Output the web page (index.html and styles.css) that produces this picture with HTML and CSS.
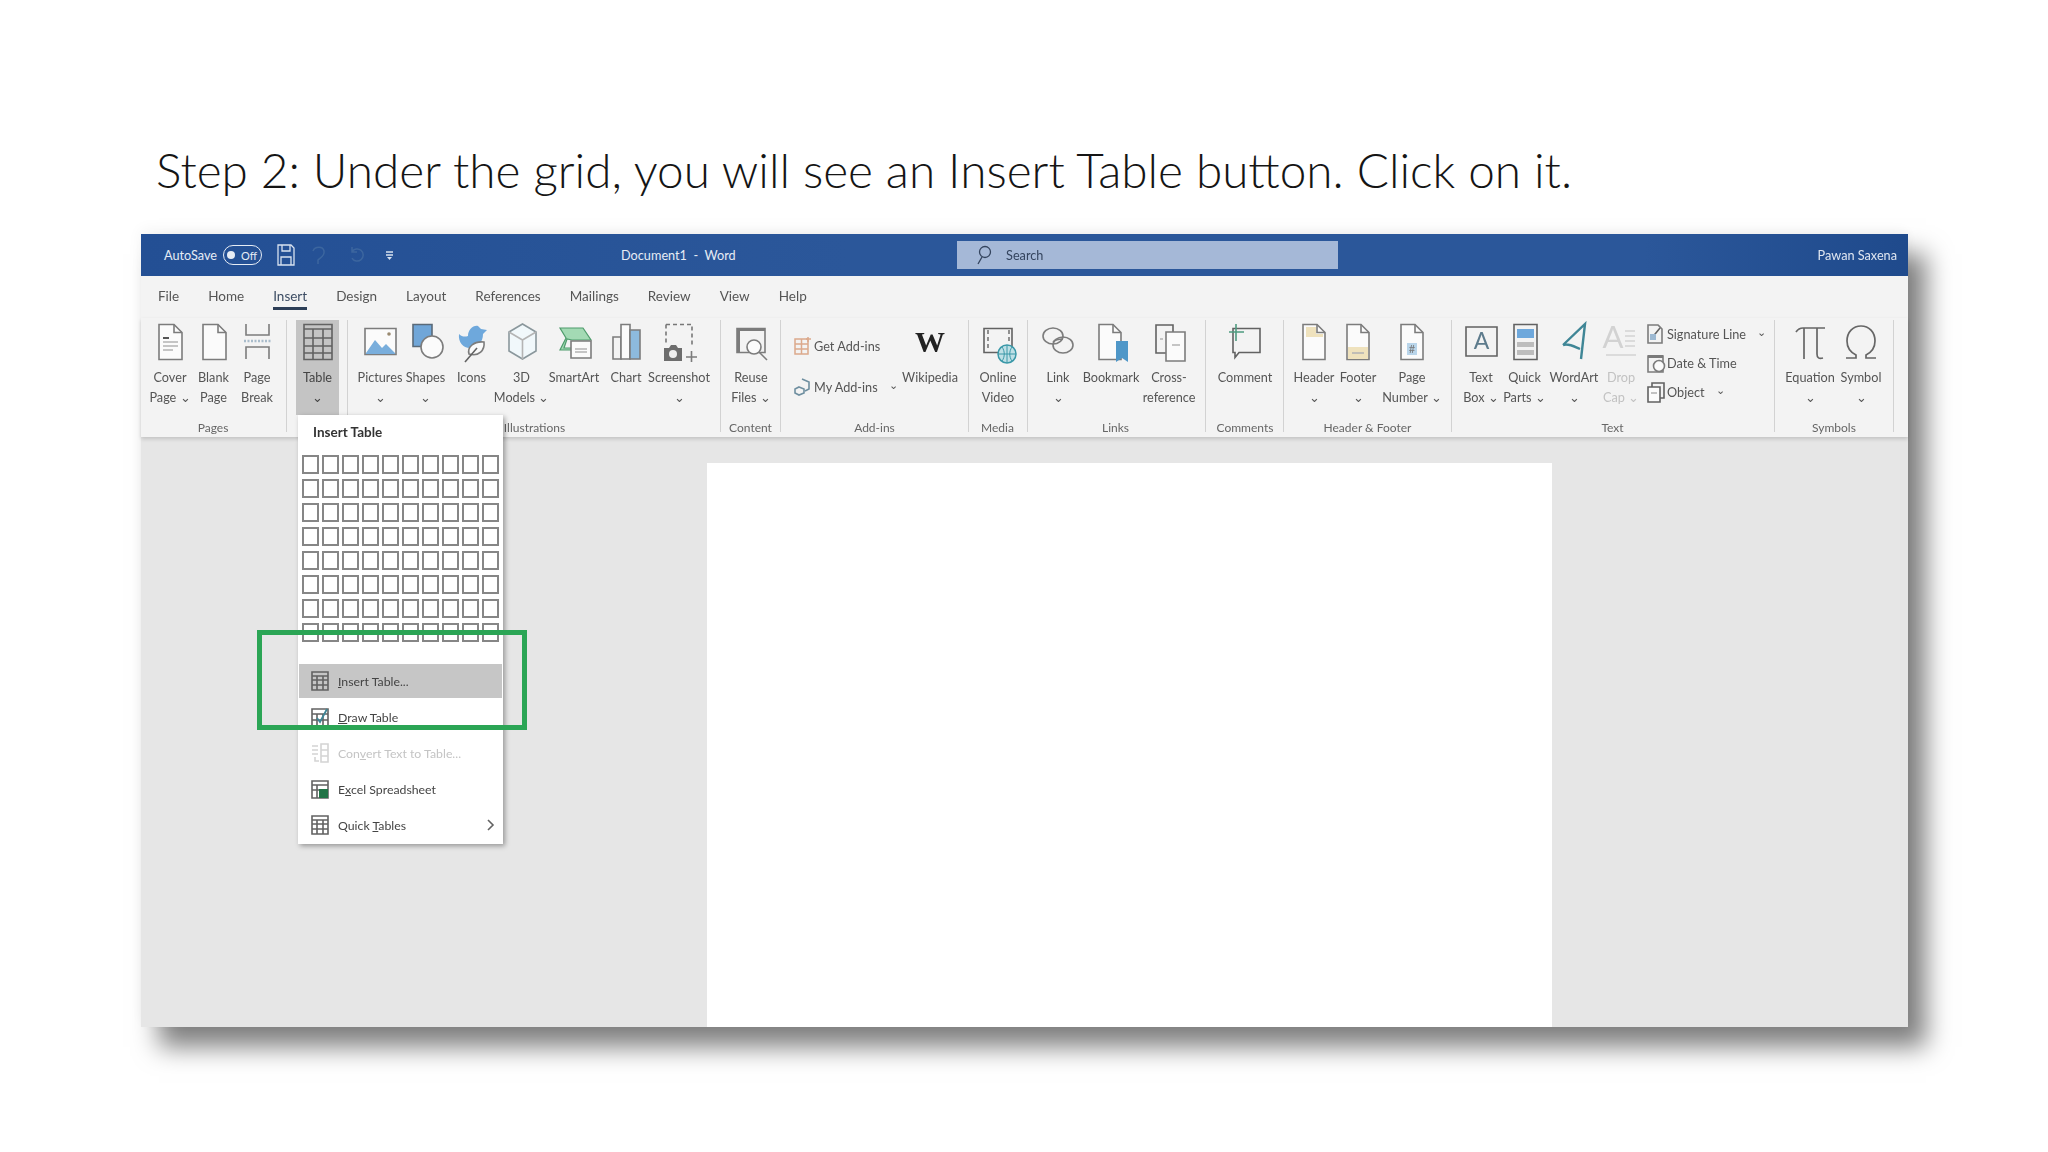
FILE: index.html
```html
<!DOCTYPE html>
<html lang="en">
<head>
<meta charset="UTF-8">
<meta name="viewport" content="width=device-width, initial-scale=1.0">
<title>Step 2</title>
<link rel="stylesheet" href="styles.css">
</head>
<body>
<div class="slide">
    <h1 class="step-title">Step 2: Under the grid, you will see an Insert Table button. Click on it.</h1>
    <div class="window">
        <!-- title bar -->
        <div class="titlebar">
            <span class="autosave">AutoSave</span>
            <span class="toggle"><i class="toggle-dot"></i>Off</span>
            <svg class="tb-icon" width="18" height="22" viewBox="0 0 18 22"><path class="tb-line" d="M1 1h13l3 3v17H1zM5 1v6h8V1M4 21v-8h10v8"/></svg>
            <svg class="tb-icon undo" width="18" height="22" viewBox="0 0 18 22"><path class="tb-dim" d="M4 7c2-5 10-5 11 0s-4 7-6 9v4"/></svg>
            <svg class="tb-icon redo" width="18" height="22" viewBox="0 0 18 22"><path class="tb-dim" d="M4 14a6 6 0 1 0 0-6M4 3v5h5"/></svg>
            <svg class="tb-icon more" width="10" height="12" viewBox="0 0 10 12"><path class="tb-line" d="M1 3h7M1 6h7"/><path d="M2 8h5l-2.500 3z" fill="#d8e2f0"/></svg>
            <span class="doc-name">Document1&nbsp; - &nbsp;Word</span>
            <div class="search">
                <svg width="18" height="20" viewBox="0 0 18 20"><circle class="search-ico" cx="10" cy="7" r="5.500"/><path class="search-ico" d="M7 12l-4 7"/></svg>
                <span>Search</span>
            </div>
            <span class="user">Pawan Saxena</span>
        </div>

        <!-- tabs -->
        <div class="tabs">
            <span class="tab">File</span>
            <span class="tab">Home</span>
            <span class="tab active">Insert</span>
            <span class="tab">Design</span>
            <span class="tab">Layout</span>
            <span class="tab">References</span>
            <span class="tab">Mailings</span>
            <span class="tab">Review</span>
            <span class="tab">View</span>
            <span class="tab">Help</span>
        </div>

        <!-- ribbon -->
        <div class="ribbon">
            <section class="group g-pages">
                <div class="items">
                    <div class="item w44">
                        <svg class="ico" viewBox="0 0 40 44"><path class="ln paper" d="M9 3.500h15l8 8v27H9z"/><path class="ln" d="M24 3.500v8h8"/><path class="dark" d="M13 17h6"/><path class="ln soft" d="M13 21h15M13 25h15M13 29h10"/></svg>
                        <span>Cover</span><span>Page ⌄</span>
                    </div>
                    <div class="item w43">
                        <svg class="ico" viewBox="0 0 40 44"><path class="ln paper" d="M9 3.500h15l8 8v27H9z"/><path class="ln" d="M24 3.500v8h8"/></svg>
                        <span>Blank</span><span>Page</span>
                    </div>
                    <div class="item w44">
                        <svg class="ico" viewBox="0 0 40 44"><path class="ln" d="M9 3v11h23V3M9 38V26h23v12"/><path class="dots" d="M7 20h27"/></svg>
                        <span>Page</span><span>Break</span>
                    </div>
                </div>
                <div class="group-name">Pages</div>
            </section>

            <section class="group g-table">
                <div class="items">
                    <div class="item w43 pressed">
                        <svg class="ico" viewBox="0 0 40 44"><path class="ln strong" d="M6 3.500h28v35H6zM6 8h28M6 17h28M6 25h28M6 32h28M15 8v30M25 8v30"/></svg>
                        <span>Table</span><span>⌄</span>
                    </div>
                </div>
                <div class="group-name"></div>
            </section>

            <section class="group g-illus">
                <div class="items">
                    <div class="item w46">
                        <svg class="ico" viewBox="0 0 40 44"><path class="ln paper" d="M5 7.500h31v26H5z"/><path d="M6 32l9-13 7 8 4-4 9 9v1H6z" fill="#79aedc"/><circle cx="29" cy="13" r="1.800" fill="#9a8a70"/></svg>
                        <span>Pictures</span><span>⌄</span>
                    </div>
                    <div class="item w45">
                        <svg class="ico" viewBox="0 0 40 44"><path class="ln blue" d="M7 3.500h19v22H7z"/><circle class="ln paper" cx="26" cy="26" r="11"/></svg>
                        <span>Shapes</span><span>⌄</span>
                    </div>
                    <div class="item w47">
                        <svg class="ico" viewBox="0 0 40 44"><path d="M7 13c3 3 6 3 9 2 0-6 5-11 10-10l3 3 6 1-4 4c0 8-5 14-13 14-7 0-12-6-11-14z" fill="#6ea8dc"/><path class="ln paper" d="M17 33c-2-7 5-13 15-12 1 8-5 15-15 12z"/><path class="ln strong" d="M13 41l12-14"/></svg>
                        <span>Icons</span>
                    </div>
                    <div class="item w53">
                        <svg class="ico" viewBox="0 0 40 44"><path class="ln cube" d="M20.500 3L34 11v19l-13.500 8L7 30V11z"/><path class="ln soft" d="M7 11l13.500 8L34 11M20.500 19v19"/></svg>
                        <span>3D</span><span>Models ⌄</span>
                    </div>
                    <div class="item w52">
                        <svg class="ico" viewBox="0 0 40 44"><path class="green-shape" d="M6 7h23l8 12H18l-5-1 -3 9h9v2H6l6-12z"/><path class="ln paper" d="M17 20h20v17H17z"/><path class="ln soft" d="M21 28h12M21 31h12"/></svg>
                        <span>SmartArt</span>
                    </div>
                    <div class="item w52">
                        <svg class="ico" viewBox="0 0 40 44"><path class="ln" fill="#ccc" d="M7 16h8v22H7z"/><path class="ln paper" d="M15 3.500h9V38h-9z"/><path class="ln blue-soft" d="M24 9h10v29H24z"/></svg>
                        <span>Chart</span>
                    </div>
                    <div class="item w54">
                        <svg class="ico" viewBox="0 0 40 44"><path class="dash" d="M7 3.500h26V26M7 3.500V22"/><path d="M5 27h5l2-3h5l2 3h4v13H5z" fill="#6d6d6d"/><circle cx="14" cy="33" r="4" fill="#eee"/><path class="ln" d="M27 36h11M32.500 30v11"/></svg>
                        <span>Screenshot</span><span>⌄</span>
                    </div>
                </div>
                <div class="group-name">Illustrations</div>
            </section>

            <section class="group g-content">
                <div class="items">
                    <div class="item w44">
                        <svg class="ico" viewBox="0 0 40 44"><path class="ln" d="M6 7.500h28v24H6z"/><path d="M6 7h28v3H6zM6 10h3v21H6z" fill="#7b7b7b"/><circle class="ln paper" cx="23" cy="26" r="7"/><path class="ln" d="M28 31l8 8"/></svg>
                        <span>Reuse</span><span>Files ⌄</span>
                    </div>
                </div>
                <div class="group-name">Content</div>
            </section>

            <section class="group g-addins">
                <div class="items">
                    <div class="stack addin-stack">
                        <div class="stack-row">
                            <svg width="20" height="20" viewBox="0 0 20 20"><path class="orange" d="M2 3h13v15H2zM2 8h13M2 13h13M8.500 3v15"/><path class="orange" d="M15 1v5M13 3h5"/></svg>
                            <span>Get Add-ins</span>
                        </div>
                        <div class="stack-row">
                            <svg width="20" height="20" viewBox="0 0 20 20"><path class="ln hex" d="M9 2l7 3v7l-4 2"/><path class="ln hex" d="M6 10l5 2v4l-5 2-4-2v-4z"/></svg>
                            <span>My Add-ins</span><span class="arrow">⌄</span>
                        </div>
                    </div>
                    <div class="item w60">
                        <div class="wiki-w">W</div>
                        <span>Wikipedia</span>
                    </div>
                </div>
                <div class="group-name">Add-ins</div>
            </section>

            <section class="group g-media">
                <div class="items">
                    <div class="item w44">
                        <svg class="ico" viewBox="0 0 40 44"><path class="ln strong" d="M6 7.500h28v24H6z"/><path class="dash" d="M10 9v21M31 9v12"/><circle cx="29" cy="33" r="9" fill="#bfe0e6" stroke="#3a98a8" stroke-width="1.500"/><path d="M20 33h18M29 24v18M24 26c3 4 3 10 0 14M34 26c-3 4-3 10 0 14" fill="none" stroke="#3a98a8"/></svg>
                        <span>Online</span><span>Video</span>
                    </div>
                </div>
                <div class="group-name">Media</div>
            </section>

            <section class="group g-links">
                <div class="items">
                    <div class="item w48">
                        <svg class="ico" viewBox="0 0 40 44"><ellipse class="ln" cx="15" cy="15" rx="10" ry="8"/><ellipse class="ln" cx="25" cy="24" rx="10" ry="8"/><path class="ln" d="M15 21c3-3 7-3 10-3"/></svg>
                        <span>Link</span><span>⌄</span>
                    </div>
                    <div class="item w58">
                        <svg class="ico" viewBox="0 0 40 44"><path class="ln paper" d="M8 3.500h14l8 8v27H8z"/><path class="ln" d="M22 3.500v8h8"/><path d="M25 20h12v21l-6-4-6 4z" fill="#4f97c8"/></svg>
                        <span>Bookmark</span>
                    </div>
                    <div class="item w58">
                        <svg class="ico" viewBox="0 0 40 44"><path class="ln strong" d="M7 4h17v28H7z"/><path class="ln paper" d="M17 11h19v29H17z"/><path class="ln soft" d="M23 24h8M11 18h3"/></svg>
                        <span>Cross-</span><span>reference</span>
                    </div>
                </div>
                <div class="group-name">Links</div>
            </section>

            <section class="group g-comments">
                <div class="items">
                    <div class="item w60">
                        <svg class="ico" viewBox="0 0 40 44"><path class="ln strong" d="M8 7.500h27v24H14l-4 5v-5H8z"/><path class="plus" d="M11 3v17M4 11h15"/></svg>
                        <span>Comment</span>
                    </div>
                </div>
                <div class="group-name">Comments</div>
            </section>

            <section class="group g-header">
                <div class="items">
                    <div class="item w44">
                        <svg class="ico" viewBox="0 0 40 44"><path class="ln paper" d="M9 3.500h14l8 8v27H9z"/><path d="M12 6h10v7h7v3H12z" fill="#efe2bd"/><path class="ln" d="M23 3.500v8h8"/></svg>
                        <span>Header</span><span>⌄</span>
                    </div>
                    <div class="item w44">
                        <svg class="ico" viewBox="0 0 40 44"><path class="ln paper" d="M9 3.500h14l8 8v27H9z"/><path d="M10 26h20v12H10z" fill="#efe2bd"/><path class="ln" d="M23 3.500v8h8"/><path class="ln soft" d="M14 32h12"/></svg>
                        <span>Footer</span><span>⌄</span>
                    </div>
                    <div class="item w64">
                        <svg class="ico" viewBox="0 0 40 44"><path class="ln paper" d="M9 3.500h14l8 8v27H9z"/><path class="ln" d="M23 3.500v8h8"/><path d="M15 22h10v12H15z" fill="#b9d5ea"/><text class="doc-hash" x="20" y="32">#</text></svg>
                        <span>Page</span><span>Number ⌄</span>
                    </div>
                </div>
                <div class="group-name">Header &amp; Footer</div>
            </section>

            <section class="group g-text">
                <div class="items">
                    <div class="item w44">
                        <svg class="ico" viewBox="0 0 40 44"><path class="ln strong" d="M5 6h31v29H5z"/><text class="box-a" x="20.500" y="28">A</text></svg>
                        <span>Text</span><span>Box ⌄</span>
                    </div>
                    <div class="item w43">
                        <svg class="ico" viewBox="0 0 40 44"><path class="ln strong" d="M9 3.500h23v35H9z"/><path d="M12 8h17v9H12z" fill="#6ea8dc"/><path d="M12 21h17v5H12zM12 29h17v5H12z" fill="#bdbdbd"/></svg>
                        <span>Quick</span><span>Parts ⌄</span>
                    </div>
                    <div class="item w56">
                        <svg class="ico" viewBox="0 0 40 44"><path class="wordart" d="M9 24L31 3l-4 35M9 24c6-2 12 2 17 4"/></svg>
                        <span>WordArt</span><span>⌄</span>
                    </div>
                    <div class="item w38 off">
                        <svg class="ico" viewBox="0 0 40 44"><text class="cap-a" x="12" y="27">A</text><path class="ln faint" d="M24 10h10M24 15h10M24 20h10M24 25h10M5 34h30"/></svg>
                        <span>Drop</span><span>Cap ⌄</span>
                    </div>
                    <div class="stack text-stack">
                        <div class="stack-row">
                            <svg width="20" height="22" viewBox="0 0 20 22"><path class="ln" d="M2 2h10l4 4v14H2z"/><path class="ln strong" d="M5 16l9-11"/><path d="M4 11h6v6H4z" fill="#9db9d2"/></svg>
                            <span>Signature Line</span><span class="arrow">⌄</span>
                        </div>
                        <div class="stack-row">
                            <svg width="20" height="22" viewBox="0 0 20 22"><path class="ln" d="M2 4h15v16H2z"/><path d="M2 3h15v3H2z" fill="#7a7a7a"/><circle class="ln paper" cx="13" cy="14" r="5.500"/></svg>
                            <span>Date &amp; Time</span>
                        </div>
                        <div class="stack-row">
                            <svg width="20" height="22" viewBox="0 0 20 22"><path class="ln strong" d="M6 2h12v15H6z"/><path class="ln strong paper" d="M2 6h12v15H2z"/><path class="ln soft" d="M5 12h6"/></svg>
                            <span>Object</span><span class="arrow">⌄</span>
                        </div>
                    </div>
                </div>
                <div class="group-name">Text</div>
            </section>

            <section class="group g-symbols">
                <div class="items">
                    <div class="item w54">
                        <svg class="ico" viewBox="0 0 40 44"><path class="thin" d="M6 11c2-3 4-4 7-4h22M14 7v31M27 7v26c0 4 2 5 6 4"/></svg>
                        <span>Equation</span><span>⌄</span>
                    </div>
                    <div class="item w48">
                        <svg class="ico" viewBox="0 0 40 44"><path class="thin" d="M5 37h10v-3c-6-3-9-8-9-14 0-9 6-15 14-15s14 6 14 15c0 6-3 11-9 14v3h10"/></svg>
                        <span>Symbol</span><span>⌄</span>
                    </div>
                </div>
                <div class="group-name">Symbols</div>
            </section>
        </div>

        <!-- document area -->
        <div class="workspace">
            <div class="page"></div>
        </div>

        <!-- table dropdown -->
        <div class="table-menu">
            <div class="menu-title">Insert Table</div>
            <div class="cell-grid">
                <i></i><i></i><i></i><i></i><i></i><i></i><i></i><i></i><i></i><i></i>
                <i></i><i></i><i></i><i></i><i></i><i></i><i></i><i></i><i></i><i></i>
                <i></i><i></i><i></i><i></i><i></i><i></i><i></i><i></i><i></i><i></i>
                <i></i><i></i><i></i><i></i><i></i><i></i><i></i><i></i><i></i><i></i>
                <i></i><i></i><i></i><i></i><i></i><i></i><i></i><i></i><i></i><i></i>
                <i></i><i></i><i></i><i></i><i></i><i></i><i></i><i></i><i></i><i></i>
                <i></i><i></i><i></i><i></i><i></i><i></i><i></i><i></i><i></i><i></i>
                <i></i><i></i><i></i><i></i><i></i><i></i><i></i><i></i><i></i><i></i>
            </div>
            <div class="menu-row hover">
                <svg width="18" height="22" viewBox="0 0 18 22"><path class="ln strong" d="M1 2h16v18H1zM1 6h16M1 10h16M1 15h16M6 6v14M12 6v14"/></svg>
                <span><u>I</u>nsert Table...</span>
            </div>
            <div class="menu-row">
                <svg width="18" height="22" viewBox="0 0 18 22"><path class="ln strong" d="M1 3h16v17H1zM1 8h16M1 14h16M6 8v12M12 8v12"/><path class="teal-check" d="M6 12l3 4 7-13"/></svg>
                <span><u>D</u>raw Table</span>
            </div>
            <div class="menu-row off">
                <svg width="18" height="22" viewBox="0 0 18 22"><path class="ln faint" d="M10 2h7v18h-7zM10 8h7M10 14h7M1 4h6M1 8h6M1 12h6M4 15v4h4"/></svg>
                <span>Con<u>v</u>ert Text to Table...</span>
            </div>
            <div class="menu-row">
                <svg width="18" height="22" viewBox="0 0 18 22"><path class="ln strong" d="M1 3h16v17H1zM1 7h16M1 12h16M6 7v13"/><path d="M8 11h9v9H8z" fill="#217346"/></svg>
                <span>E<u>x</u>cel Spreadsheet</span>
            </div>
            <div class="menu-row">
                <svg width="18" height="22" viewBox="0 0 18 22"><path class="ln strong" d="M1 2h16v18H1zM1 6h16M1 10h16M1 15h16M6 6v14M12 6v14"/></svg>
                <span>Quick <u>T</u>ables</span>
                <svg class="chevron" width="8" height="12" viewBox="0 0 8 12"><path class="ln strong" d="M1 1l5 5-5 5"/></svg>
            </div>
        </div>

        <!-- highlight drawn on the screenshot -->
        <div class="callout"></div>
    </div>
</div>
</body>
</html>
```

FILE: styles.css
```css
html, body {
    margin: 0;
    background: #fff;
}
.slide {
    width: 2048px;
    height: 1152px;
    overflow: hidden;
    padding: 146px 0 0 141px;
    box-sizing: border-box;
}
.step-title {
    margin: 0 0 41px 15px;
    height: 47px;
    font-family: "Lato", sans-serif;
    font-weight: 300;
    font-size: 47.700px;
    line-height: 47px;
    color: #151515;
    white-space: nowrap;
}

.window {
    position: relative;
    width: 1767px;
    height: 793px;
    display: flex;
    flex-direction: column;
    background: #e6e6e6;
    box-shadow: 18px 20px 24px rgba(0, 0, 0, 0.5), 0 -4px 14px rgba(0, 0, 0, 0.05);
    font-family: "Lato", "Liberation Sans", sans-serif;
    font-size: 12.700px;
    color: #555;
    filter: blur(0.7px);
}

/* title bar */
.titlebar {
    height: 42px;
    flex: none;
    display: flex;
    align-items: center;
    background: linear-gradient(90deg, #234f94 0%, #2b579a 40%, #2b579a 85%, #1f4a8c 100%);
    color: #e6ecf5;
}
.autosave {
    margin-left: 23px;
}
.toggle {
    margin-left: 6px;
    width: 39px;
    height: 20px;
    box-sizing: border-box;
    border: 1.5px solid #e6ecf5;
    border-radius: 10px;
    display: flex;
    align-items: center;
    justify-content: flex-end;
    gap: 4px;
    padding-right: 4px;
    font-size: 11px;
}
.toggle-dot {
    width: 8px;
    height: 8px;
    margin-right: 2px;
    border-radius: 50%;
    background: #e6ecf5;
}
.tb-icon {
    margin-left: 15px;
}
.tb-icon.undo {
    margin-left: 14px;
}
.tb-icon.redo {
    margin-left: 21px;
}
.tb-icon.more {
    margin-left: 19px;
}
.tb-line {
    fill: none;
    stroke: #d8e2f0;
    stroke-width: 1.3;
}
.tb-dim {
    fill: none;
    stroke: #3c669f;
    stroke-width: 1.5;
}
.doc-name {
    margin-left: 226px;
    width: 336px;
    flex: none;
}
.search {
    width: 381px;
    height: 28px;
    flex: none;
    display: flex;
    align-items: center;
    gap: 13px;
    padding-left: 18px;
    box-sizing: border-box;
    background: #a5b8d7;
    color: #34445e;
}
.search-ico {
    fill: none;
    stroke: #34445e;
    stroke-width: 1.3;
}
.user {
    margin-left: auto;
    margin-right: 11px;
    color: #dfe6f1;
}

/* tabs */
.tabs {
    height: 42px;
    flex: none;
    display: flex;
    gap: 29px;
    padding: 10px 0 0 17px;
    box-sizing: border-box;
    background: #f3f3f3;
    font-size: 13.500px;
}
.tab {
    height: 24px;
    line-height: 20px;
}
.tab.active {
    border-bottom: 3px solid #2c3e57;
    box-sizing: border-box;
    height: 24px;
    color: #3c4c63;
}

/* ribbon */
.ribbon {
    height: 119px;
    flex: none;
    display: flex;
    padding-top: 2px;
    box-sizing: border-box;
    background: #f3f3f3;
    box-shadow: 0 2px 4px rgba(0, 0, 0, 0.16);
    z-index: 1;
}
.group {
    position: relative;
    box-sizing: border-box;
    height: 112px;
    border-right: 1px solid #d2d2d2;
    display: flex;
    flex-direction: column;
}
.g-pages { width: 146px; padding-left: 7px; }
.g-table { width: 61px; padding-left: 9px; }
.g-illus { width: 373px; padding-left: 9px; }
.g-content { width: 60px; padding-left: 8px; }
.g-addins { width: 188px; padding-left: 8px; }
.g-media { width: 59px; padding-left: 7px; }
.g-links { width: 178px; padding-left: 6px; }
.g-comments { width: 78px; padding-left: 9px; }
.g-header { width: 168px; padding-left: 8px; }
.g-text { width: 323px; padding-left: 7px; }
.g-symbols { width: 119px; padding-left: 8px; }

.items {
    height: 95px;
    flex: none;
    display: flex;
}
.item {
    flex: none;
    height: 95px;
    display: flex;
    flex-direction: column;
    align-items: center;
    line-height: 20px;
    white-space: nowrap;
}
.item.pressed {
    background: #c4c4c4;
    color: #444;
}
.item.off {
    color: #c2c2c2;
}
.w38 { width: 38px; }
.w43 { width: 43px; }
.w44 { width: 44px; }
.w45 { width: 45px; }
.w46 { width: 46px; }
.w47 { width: 47px; }
.w48 { width: 48px; }
.w52 { width: 52px; }
.w53 { width: 53px; }
.w54 { width: 54px; }
.w56 { width: 56px; }
.w58 { width: 58px; }
.w60 { width: 60px; }
.w64 { width: 64px; }

.ico {
    width: 40px;
    height: 44px;
    margin: 1px 0 2px;
    flex: none;
}
.group-name {
    padding-right: 8px;
    text-align: center;
    line-height: 16px;
    margin-top: 5px;
    font-size: 12px;
    color: #666;
}
.g-table .group-name {
    height: 16px;
}

/* icon strokes */
.ln {
    fill: none;
    stroke: #7c7c7c;
    stroke-width: 1.6;
}
.ln.paper { fill: #fbfbfb; }
.ln.blue { fill: #70a6d8; stroke: #5a6a78; }
.ln.blue-soft { fill: #8dbadd; }
.ln.soft { stroke: #b4b4b4; }
.ln.strong { stroke: #626262; }
.ln.faint { stroke: #d4d4d4; }
.ln.cube { fill: #f1f8fb; stroke: #8a979c; }
.ln.hex { stroke: #6f8fa0; }
.thin { fill: none; stroke: #666; stroke-width: 1.700; }
.dark { fill: none; stroke: #555; stroke-width: 2; }
.dots { fill: none; stroke: #a9bccb; stroke-width: 2.5; stroke-dasharray: 2 1.500; }
.dash { fill: none; stroke: #777; stroke-width: 1.6; stroke-dasharray: 4 3; }
.green-shape { fill: #a3dab4; stroke: #4f9c6c; stroke-width: 1.200; }
.plus { fill: none; stroke: #4f9c80; stroke-width: 1.600; }
.orange { fill: none; stroke: #dca98c; stroke-width: 1.500; }
.wordart { fill: none; stroke: #3f8696; stroke-width: 2.400; }
.teal-check { fill: none; stroke: #3f8696; stroke-width: 1.800; }
.doc-hash { font-size: 11px; fill: #777; text-anchor: middle; font-family: "Lato", sans-serif; }
.box-a { font-size: 23px; fill: #5d7b8c; text-anchor: middle; font-family: "Lato", sans-serif; }
.cap-a { font-size: 31px; fill: #d2d2d2; text-anchor: middle; font-family: "Lato", sans-serif; }

.wiki-w {
    height: 47px;
    font-family: "Liberation Serif", serif;
    font-weight: 700;
    font-size: 30px;
    line-height: 44px;
    color: #222;
}

/* small stacked commands */
.stack {
    flex: none;
    display: flex;
    flex-direction: column;
    white-space: nowrap;
}
.stack-row {
    display: flex;
    align-items: center;
    gap: 1px;
}
.addin-stack {
    width: 111px;
    padding: 16px 0 0 4px;
    box-sizing: border-box;
    gap: 21px;
    font-size: 12.700px;
}
.text-stack {
    padding: 3px 0 0 6px;
    gap: 7px;
    font-size: 12.700px;
}
.arrow {
    margin-left: 10px;
    font-size: 11px;
    line-height: 10px;
    position: relative;
    top: -2px;
}

.workspace {
    flex: 1;
    padding: 26px 0 0 566px;
}
.page {
    width: 845px;
    height: 100%;
    background: #fff;
}

/* dropdown */
.table-menu {
    position: absolute;
    left: 157px;
    top: 181px;
    width: 205px;
    height: 429px;
    box-sizing: border-box;
    background: #fff;
    box-shadow: 2px 2px 5px rgba(0, 0, 0, 0.35);
    z-index: 2;
    color: #444;
}
.menu-title {
    height: 40px;
    padding-left: 15px;
    line-height: 34px;
    font-weight: 700;
    font-size: 13.500px;
    color: #333;
}
.cell-grid {
    display: grid;
    grid-template-columns: repeat(10, 17px);
    grid-auto-rows: 19px;
    column-gap: 3px;
    row-gap: 5px;
    padding-left: 4px;
    height: 209px;
}
.cell-grid i {
    border: 2px solid #868686;
    background: #fff;
}
.menu-row {
    height: 36px;
    display: flex;
    align-items: center;
    padding: 0 8px 0 13px;
    gap: 9px;
    font-size: 12.300px;
}
.menu-row.hover {
    height: 34px;
    margin: 0 1px 1px;
    padding-left: 12px;
    background: #c6c6c6;
}
.menu-row.off {
    color: #c4c4c4;
}
.chevron {
    margin-left: auto;
}

.callout {
    position: absolute;
    left: 116px;
    top: 396px;
    width: 270px;
    height: 100px;
    box-sizing: border-box;
    border: 5px solid #2ba555;
    z-index: 3;
}
```
